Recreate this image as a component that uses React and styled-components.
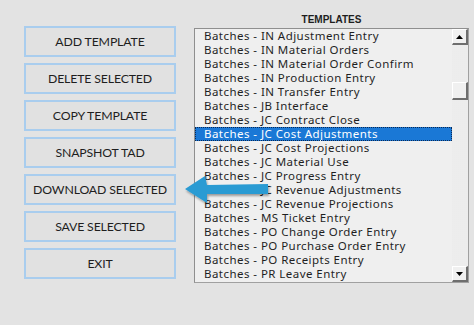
import React from "react";
import styled, { createGlobalStyle } from "styled-components";

const Global = createGlobalStyle`
  html, body { margin: 0; padding: 0; background: #e3e3e3; }
  * { box-sizing: border-box; }
`;

const Frame = styled.div`
  position: relative;
  width: 474px;
  height: 325px;
  background: #e3e3e3;
  display: flex;
  align-items: flex-start;
  overflow: hidden;
`;

const ButtonColumn = styled.div`
  display: flex;
  flex-direction: column;
  gap: 6px;
  padding: 26px 0 0 24px;
`;

const ActionButton = styled.div`
  width: 152px;
  height: 31px;
  border: 2px solid #a9cdee;
  background: #e1e1e1;
  display: flex;
  align-items: center;
  justify-content: center;
  font-family: Lato, "Open Sans", sans-serif;
  font-size: 12.3px;
  color: #1e1e1e;
  letter-spacing: -0.15px;
`;

const TemplatePanel = styled.div`
  margin-left: 18px;
  padding-top: 11px;
  display: flex;
  flex-direction: column;
  width: 275px;
`;

const PanelTitle = styled.div`
  height: 17px;
  text-align: center;
  font-family: "Liberation Sans", Arial, sans-serif;
  font-weight: bold;
  font-size: 10px;
  line-height: 17px;
  color: #1e1e1e;
`;

const ListBox = styled.div`
  height: 255px;
  border: 1px solid #8f8f8f;
  border-right-color: #a0a0a0;
  border-bottom-color: #a0a0a0;
  background: #efefef;
  display: flex;
`;

const Items = styled.div`
  flex: 1;
  display: flex;
  flex-direction: column;
`;

const Item = styled.div`
  height: 14px;
  line-height: 14px;
  padding-left: 9px;
  font-family: "Noto Sans", "Open Sans", sans-serif;
  font-size: 11.5px;
  letter-spacing: 0.45px;
  white-space: nowrap;
  color: ${(p) => (p.$selected ? "#ffffff" : "#1f1f1f")};
  background: ${(p) => (p.$selected ? "#1a78d6" : "transparent")};
  outline: ${(p) => (p.$selected ? "1px dotted #0b2a55" : "none")};
  outline-offset: -1px;
`;

const ScrollBar = styled.div`
  width: 16px;
  display: flex;
  flex-direction: column;
  background-color: #f4f4f4;
  background-image: radial-gradient(#e4e4e4 0.6px, transparent 0.8px);
  background-size: 2px 2px;
`;

const ScrollButton = styled.div`
  height: 16px;
  display: flex;
  align-items: center;
  justify-content: center;
  background: #f0f0f0;
  border-right: 2px solid #6e6e6e;
  border-bottom: 2px solid #6e6e6e;
  border-top: 1px solid #ffffff;
  border-left: 1px solid #ffffff;
`;

const Thumb = styled(ScrollButton)`
  margin-top: 37px;
  height: 18px;
`;

const Spacer = styled.div`
  flex: 1;
`;

const Arrow = styled.svg`
  position: absolute;
  left: 180px;
  top: 168px;
  width: 100px;
  height: 44px;
`;

const buttons = [
  "ADD TEMPLATE",
  "DELETE SELECTED",
  "COPY TEMPLATE",
  "SNAPSHOT TAD",
  "DOWNLOAD SELECTED",
  "SAVE SELECTED",
  "EXIT",
];

const items = [
  "IN Adjustment Entry",
  "IN Material Orders",
  "IN Material Order Confirm",
  "IN Production Entry",
  "IN Transfer Entry",
  "JB Interface",
  "JC Contract Close",
  "JC Cost Adjustments",
  "JC Cost Projections",
  "JC Material Use",
  "JC Progress Entry",
  "JC Revenue Adjustments",
  "JC Revenue Projections",
  "MS Ticket Entry",
  "PO Change Order Entry",
  "PO Purchase Order Entry",
  "PO Receipts Entry",
  "PR Leave Entry",
];

const Tri = ({ up }) => (
  <svg width="7" height="4" viewBox="0 0 7 4">
    <polygon points={up ? "0,4 7,4 3.5,0" : "0,0 7,0 3.5,4"} fill="#000" />
  </svg>
);

export default function App() {
  return (
    <>
      <Global />
      <Frame>
        <ButtonColumn>
          {buttons.map((b) => (
            <ActionButton key={b}>{b}</ActionButton>
          ))}
        </ButtonColumn>
        <TemplatePanel>
          <PanelTitle>TEMPLATES</PanelTitle>
          <ListBox>
            <Items>
              {items.map((it) => (
                <Item key={it} $selected={it === "JC Cost Adjustments"}>
                  Batches - {it}
                </Item>
              ))}
            </Items>
            <ScrollBar>
              <ScrollButton>
                <Tri up />
              </ScrollButton>
              <Thumb />
              <Spacer />
              <ScrollButton>
                <Tri />
              </ScrollButton>
            </ScrollBar>
          </ListBox>
        </TemplatePanel>
        <Arrow viewBox="0 0 100 44">
          <defs>
            <filter id="sh" x="-20%" y="-30%" width="140%" height="170%">
              <feDropShadow dx="1" dy="2" stdDeviation="1.2" floodColor="#000" floodOpacity="0.35" />
            </filter>
          </defs>
          <polygon
            points="5,21 25,8 27,17 88,16 88,26 27,26 27,35"
            fill="#2b9bd3"
            filter="url(#sh)"
          />
        </Arrow>
      </Frame>
    </>
  );
}
